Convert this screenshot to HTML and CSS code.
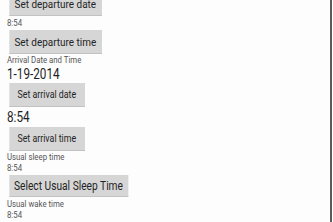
FILE: index.html
```html
<!DOCTYPE html>
<html>
<head>
<meta charset="utf-8">
<link rel="stylesheet" href="styles.css">
</head>
<body>
<div class="screen">
  <div class="content">
    <button class="btn btn-dep first">Set departure date</button>
    <div class="small s-first">8:54</div>
    <button class="btn btn-dep">Set departure time</button>
    <div class="small l-arrival">Arrival Date and Time</div>
    <div class="big b-date">1-19-2014</div>
    <button class="btn btn-arr">Set arrival date</button>
    <div class="big b-time">8:54</div>
    <button class="btn btn-arr">Set arrival time</button>
    <div class="small l-sleep">Usual sleep time</div>
    <div class="small s-sleep">8:54</div>
    <button class="btn btn-sleep">Select Usual Sleep Time</button>
    <div class="small l-wake">Usual wake time</div>
    <div class="small s-wake">8:54</div>
  </div>
  <div class="scrollbar"></div>
</div>
</body>
</html>
```
FILE: styles.css
```css
html, body {
  margin: 0;
  padding: 0;
  background: #fdfdfd;
  overflow: hidden;
}
.screen {
  width: 333px;
  height: 222px;
  display: flex;
  overflow: hidden;
}
.content {
  flex: 1;
  display: flex;
  flex-direction: column;
  align-items: flex-start;
  padding-left: 8.2px;
  font-family: Roboto, "Liberation Sans", sans-serif;
  transform: scaleX(0.85);
  transform-origin: 0 0;
}
.scrollbar {
  width: 2px;
  margin-right: 1px;
  background: #5a5a5a;
}
.btn {
  font-family: Roboto, "Liberation Sans", sans-serif;
  color: #242424;
  background: #d6d6d6;
  border: none;
  border-bottom: 1px solid #c2c2c2;
  height: 24px;
  padding: 0;
  margin: 0 0 0 2.4px;
  text-align: center;
}
.btn-dep {
  width: 109px;
  font-size: 11.7px;
}
.btn-arr {
  width: 89px;
  font-size: 10.4px;
}
.btn-sleep {
  width: 140px;
  height: 22px;
  font-size: 12px;
  margin-top: 2px;
}
.first {
  margin-top: -8px;
}
.small {
  font-size: 9.2px;
  color: #555;
  line-height: 11px;
}
.s-first {
  line-height: 14px;
}
.l-arrival {
  line-height: 12px;
}
.l-wake {
  line-height: 12px;
  margin-top: 1px;
}
.s-wake {
  line-height: 10px;
}
.big {
  font-size: 13.8px;
  color: #1e1e1e;
}
.b-date {
  line-height: 17px;
}
.b-time {
  line-height: 20px;
}
```
